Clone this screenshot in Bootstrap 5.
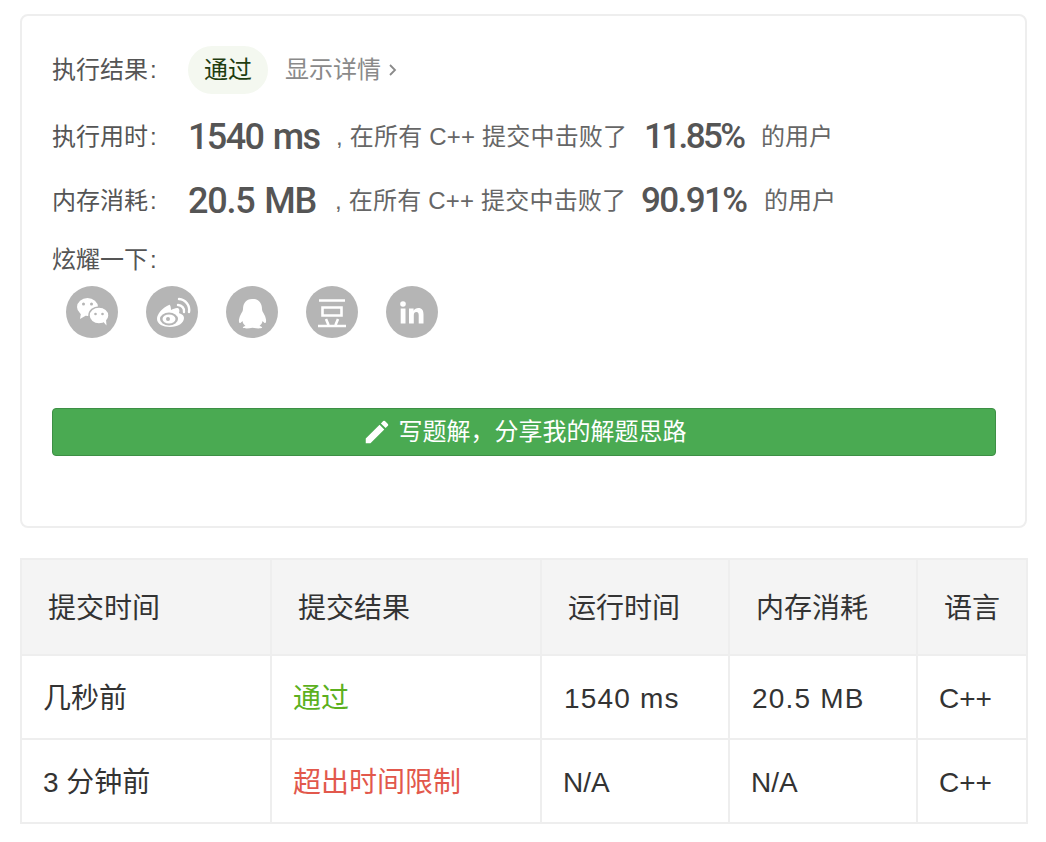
<!DOCTYPE html>
<html lang="zh">
<head>
<meta charset="utf-8">
<title>提交结果</title>
<link rel="stylesheet" href="https://cdn.jsdelivr.net/npm/bootstrap@5.3.0/dist/css/bootstrap.min.css">
<style>
body{background:#fff;font-family:"Liberation Sans","Noto Sans CJK SC",sans-serif;color:#555;}
.page-wrap{padding:14px 19px 0 20px;}
.result-panel{border:2px solid #eee;border-radius:8px;height:514px;padding:29px 30px 0 30px;}
.stat-row{display:flex;align-items:center;font-size:24px;color:#666;white-space:nowrap;}
.row-status{height:50px;}
.row-time{height:64px;margin-top:10px;}
.row-mem{height:64px;}
.stat-label{width:136px;flex:none;color:#555;}
.label-colon{margin-left:2px;}
.status-pill{width:80px;height:48px;border-radius:24px;background:#f4f8f0;color:#1f3d10;display:flex;align-items:center;justify-content:center;font-size:24px;}
.detail-link{color:#8a8a8a;margin-left:17px;display:flex;align-items:center;gap:7px;font-size:24px;}
.big-num{font-family:Roboto,"Liberation Sans",sans-serif;font-weight:500;font-size:36px;color:#555;letter-spacing:-1.2px;word-spacing:2px;flex:none;}
.num-time{width:148px;letter-spacing:-1.6px;}
.num-mem{width:147px;}
.big-pct{font-family:Roboto,"Liberation Sans",sans-serif;font-weight:500;font-size:35px;color:#555;letter-spacing:-1.6px;flex:none;}
.pct-time{width:117px;letter-spacing:-2.600px;}
.pct-mem{width:123px;}
.tail-text{font-size:24px;flex:none;}
.tail-wide{width:308px;letter-spacing:.2px;}
.tail-mem{width:306px;letter-spacing:.2px;}
.share-label{font-size:24px;color:#555;margin-top:12px;line-height:30px;}
.share-list{display:flex;gap:28px;padding-left:14px;margin-top:11px;}
.share-item{width:52px;height:52px;display:block;}
.write-btn{display:flex;align-items:center;justify-content:center;gap:7px;width:944px;height:48px;margin-top:70px;padding:0;background:#4aaa52;border:1px solid #3d8f45;border-radius:4px;color:#fff;font-size:24px;}
.write-btn:hover{background:#4aaa52;color:#fff;border-color:#3d8f45;}
.sub-table{width:1006px;margin:30px 0 0;table-layout:fixed;border-collapse:collapse;font-size:28px;color:#333;}
.sub-table th,.sub-table td{border:2px solid #eee;padding:0;vertical-align:middle;color:#333;font-weight:400;}
.sub-table thead th{background:#f4f4f4;height:96px;padding:4px 0 0 26px;}
.sub-table tbody td{height:84px;padding:4px 0 0 21px;}
.sub-table tbody td.cell-num{letter-spacing:1.200px;padding-left:22px;}
.st-ok{color:#5cb01e !important;}
.st-bad{color:#e2584c !important;}
</style>
</head>
<body>
<div class="page-wrap">
  <div class="result-panel">
    <div class="stat-row row-status">
      <span class="stat-label">执行结果<span class="label-colon">:</span></span>
      <span class="status-pill">通过</span>
      <a class="detail-link text-decoration-none" href="#">显示详情
        <svg width="9" height="14" viewBox="0 0 9 14" aria-hidden="true"><path d="M2 2l5 5-5 5" fill="none" stroke="#8a8a8a" stroke-width="1.8"/></svg>
      </a>
    </div>
    <div class="stat-row row-time">
      <span class="stat-label">执行用时<span class="label-colon">:</span></span>
      <span class="big-num num-time">1540 ms</span>
      <span class="tail-text tail-wide">, 在所有 C++ 提交中击败了</span>
      <span class="big-pct pct-time">11.85%</span>
      <span class="tail-text">的用户</span>
    </div>
    <div class="stat-row row-mem">
      <span class="stat-label">内存消耗<span class="label-colon">:</span></span>
      <span class="big-num num-mem">20.5 MB</span>
      <span class="tail-text tail-mem">, 在所有 C++ 提交中击败了</span>
      <span class="big-pct pct-mem">90.91%</span>
      <span class="tail-text">的用户</span>
    </div>
    <div class="share-label">炫耀一下<span class="label-colon">:</span></div>
    <div class="share-list">
      <svg class="share-item" viewBox="0 0 52 52" aria-label="微信"><circle cx="26" cy="26" r="26" fill="#b5b5b5"/>
        <ellipse cx="21.500" cy="21" rx="10.500" ry="9" fill="#fff"/><path d="M15 27l-1 6 6-3.500z" fill="#fff"/>
        <circle cx="17.500" cy="18" r="1.500" fill="#b5b5b5"/><circle cx="25.500" cy="18" r="1.500" fill="#b5b5b5"/>
        <ellipse cx="33" cy="29.500" rx="10" ry="8.600" fill="#fff" stroke="#b5b5b5" stroke-width="1.500"/><path d="M37 35.500l3.500 4-.5-6z" fill="#fff"/>
        <circle cx="29.500" cy="28" r="1.300" fill="#b5b5b5"/><circle cx="36.500" cy="28" r="1.300" fill="#b5b5b5"/></svg>
      <svg class="share-item" viewBox="0 0 52 52" aria-label="微博"><circle cx="26" cy="26" r="26" fill="#b5b5b5"/>
        <path d="M23 19c-7 3-12 9-12 14 0 5 6 8 13 8 8 0 14-4 14-9 0-3-3-4-5-5 1-3 0-5-2-5-2 0-4 1-6 2 0-3-1-6-2-5z" fill="#fff"/>
        <ellipse cx="23" cy="33" rx="9" ry="6.500" fill="#b5b5b5"/><ellipse cx="23" cy="33" rx="6.500" ry="4.500" fill="#fff"/><circle cx="22" cy="33" r="2" fill="#b5b5b5"/>
        <path d="M32 19a6 6 0 0 1 6 7M33 13a11 11 0 0 1 10 13" fill="none" stroke="#fff" stroke-width="2.400" stroke-linecap="round"/></svg>
      <svg class="share-item" viewBox="0 0 52 52" aria-label="QQ"><circle cx="26" cy="26" r="26" fill="#b5b5b5"/>
        <path d="M26 13c-6 0-9 4.500-9 10 0 2-1 3-2.500 6-1.800 3.500-2 7-1 8 .8.500 2-1 3-2 .3 2 1.200 3.500 3 5-2 .5-3 1-2.500 1.800 1 .8 5.500.8 9.500 0 4 .8 8.500.8 9.500 0 .5-.8-.5-1.300-2.500-1.800 1.800-1.500 2.700-3 3-5 1 1 2.200 2.500 3 2 1-1 .8-4.500-1-8-1.500-3-2.500-4-2.500-6 0-5.500-3-10-9-10z" fill="#fff"/></svg>
      <svg class="share-item" viewBox="0 0 52 52" aria-label="豆瓣"><circle cx="26" cy="26" r="26" fill="#b5b5b5"/>
        <path d="M13 14.500h26M16.500 21.500h19v8h-19zM20 33l2.500 6M32 33l-2.500 6M12 40h28" fill="none" stroke="#fff" stroke-width="2.600"/></svg>
      <svg class="share-item" viewBox="0 0 52 52" aria-label="LinkedIn"><circle cx="26" cy="26" r="26" fill="#b5b5b5"/>
        <circle cx="17" cy="18" r="2.800" fill="#fff"/><rect x="14.700" y="22.500" width="4.800" height="15" fill="#fff"/>
        <path d="M23 22.500h4.600v2.200c1-1.600 2.700-2.600 4.700-2.600 3.700 0 5.200 2.300 5.200 6.300v9.100h-4.800v-8.300c0-2-.7-3.100-2.300-3.100-1.700 0-2.600 1.200-2.600 3.100v8.300H23z" fill="#fff"/></svg>
    </div>
    <a class="btn write-btn" href="#">
      <svg width="30" height="30" viewBox="0 0 24 24" aria-hidden="true"><path d="M3 17.250V21h3.750L17.810 9.940l-3.750-3.750L3 17.250zM20.710 7.040a1 1 0 0 0 0-1.410l-2.340-2.340a1 1 0 0 0-1.410 0l-1.830 1.830 3.750 3.750 1.830-1.830z" fill="#fff"/></svg>
      <span>写题解&#xFF0C;分享我的解题思路</span>
    </a>
  </div>
  <table class="sub-table">
    <colgroup><col style="width:250px"><col style="width:270px"><col style="width:188px"><col style="width:188px"><col style="width:110px"></colgroup>
    <thead>
      <tr><th>提交时间</th><th>提交结果</th><th>运行时间</th><th>内存消耗</th><th>语言</th></tr>
    </thead>
    <tbody>
      <tr><td>几秒前</td><td class="st-ok">通过</td><td class="cell-num">1540 ms</td><td class="cell-num">20.5 MB</td><td>C++</td></tr>
      <tr><td>3 分钟前</td><td class="st-bad">超出时间限制</td><td>N/A</td><td>N/A</td><td>C++</td></tr>
    </tbody>
  </table>
</div>
<script src="https://cdn.jsdelivr.net/npm/bootstrap@5.3.0/dist/js/bootstrap.bundle.min.js"></script>
</body>
</html>
